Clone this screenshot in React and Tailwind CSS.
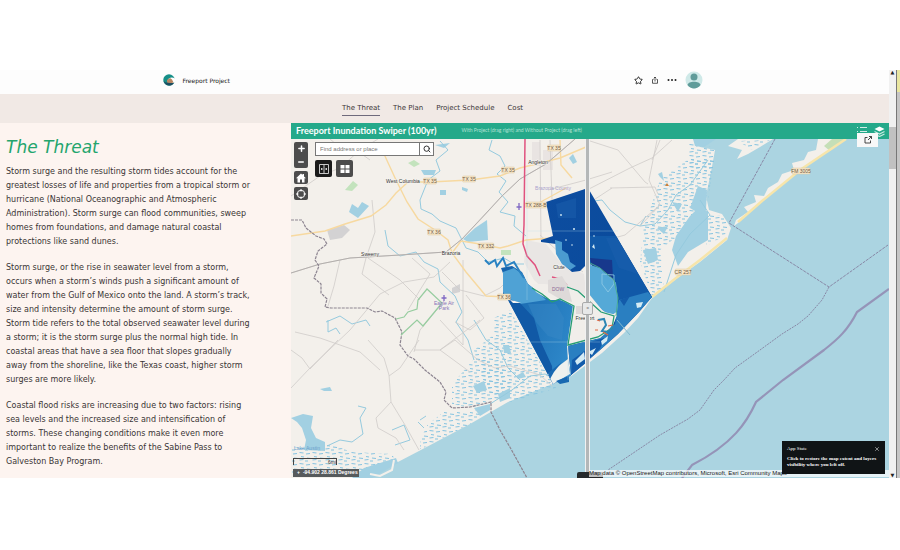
import React from 'react';
import { Search, Home, X, Plus, Minus, ExternalLink, Star, Layers } from 'lucide-react';

const navItems = ['The Threat', 'The Plan', 'Project Schedule', 'Cost'];

const paragraphs = [
  'Storm surge and the resulting storm tides account for the greatest losses of life and properties from a tropical storm or hurricane (National Oceanographic and Atmospheric Administration). Storm surge can flood communities, sweep homes from foundations, and damage natural coastal protections like sand dunes.',
  'Storm surge, or the rise in seawater level from a storm, occurs when a storm’s winds push a significant amount of water from the Gulf of Mexico onto the land. A storm’s track, size and intensity determine the amount of storm surge. Storm tide refers to the total observed seawater level during a storm; it is the storm surge plus the normal high tide. In coastal areas that have a sea floor that slopes gradually away from the shoreline, like the Texas coast, higher storm surges are more likely.',
  'Coastal flood risks are increasing due to two factors: rising sea levels and the increased size and intensification of storms. These changing conditions make it even more important to realize the benefits of the Sabine Pass to Galveston Bay Program.',
];

const shields = [
  { label: 'TX 35', x: 430, y: 181 },
  { label: 'TX 35', x: 469, y: 179 },
  { label: 'TX 35', x: 508, y: 170 },
  { label: 'TX 35', x: 554, y: 148 },
  { label: 'TX 36', x: 434, y: 232 },
  { label: 'TX 332', x: 486, y: 246 },
  { label: 'TX 288-B', x: 536, y: 205 },
  { label: 'TX 36', x: 504, y: 297 },
  { label: 'CR 257', x: 683, y: 272 },
  { label: 'FM 3005', x: 801, y: 171 },
];

const places = [
  { label: 'West Columbia', x: 403, y: 183 },
  { label: 'Angleton', x: 538, y: 164 },
  { label: 'Sweeny', x: 370, y: 256 },
  { label: 'Brazoria', x: 451, y: 255 },
  { label: 'Clute', x: 559, y: 269 },
  { label: 'Freeport', x: 585, y: 320 },
];

const roads = [
  'M291 273 L320 264 L350 258 L400 255 L446 252 L462 239 L484 216 L502 196 L520 179 L546 164 L575 139',
  'M295 332 L320 338 L360 352 L380 370',
  'M291 388 L310 368 L350 330 L380 294 L404 282 L434 277 L450 262',
  'M378 139 L360 150 L340 168 L320 176 L291 196',
  'M372 200 L375 232 L366 258 L362 274 L389 295',
  'M340 260 L334 286 L328 306',
  'M368 258 L400 280 L420 300',
  'M412 258 L430 274 L420 290 L408 310',
  'M442 272 L460 290 L484 296 L500 288 L510 278',
  'M463 260 L463 345 L440 320',
  'M368 340 L384 358 L389 375 L391 402 L405 425 L419 450',
  'M391 402 L376 418 L378 428 L396 438 L404 450',
  'M419 340 L400 368 L389 376',
  'M455 340 L440 350 L414 350',
  'M291 350 L302 358 L310 369 L338 340',
  'M455 340 L478 360 L495 368 L510 366',
  'M672 140 L652 158 L630 168 L587 190',
  'M657 140 L649 180 L660 205 L640 226',
  'M587 140 L618 150 L645 182 L648 184',
  'M610 188 L655 187 L658 194',
  'M548 190 L586 180 L612 172',
  'M540 140 L541 240',
  'M550 140 L552 200',
  'M660 140 L652 160',
  'M480 320 L440 350 L470 372',
  'M440 306 L420 330 L414 352',
  'M586 205 L612 188',
  'M510 366 L540 375 L552 386',
  'M466 295 L484 318 L470 330 L455 322',
  'M330 139 L345 152 L356 150 L370 160',
  'M540 235 L570 262 L583 272',
  'M600 242 L625 235 L660 205',
];

const highways = [
  'M291 236 L325 231 L345 224 L371 216 L386 205 L396 193 L408 182 L430 182 L470 180 L500 176 L520 168 L560 158 L586 147',
  'M384 154 L396 180 L407 202 L418 219 L435 230 L448 240 L452 253 L466 272 L486 296 L508 297',
  'M452 253 L461 241 L480 244 L500 248 L508 246 L526 240 L552 238',
  'M535 205 L548 198 L566 188',
  'M560 140 L561 165 L572 178',
];

const creeks = [
  'M440 141 L448 150 L436 160 L440 171 L428 180 L420 200 L421 209 L432 214 L440 221 L456 228 L466 248 L478 252 L488 262 L504 258 L514 264 L524 264',
  'M492 140 L489 150 L500 156 L505 166 L497 174 L506 181 L499 192 L508 202 L500 212 L515 216 L514 226 L526 236',
  'M385 230 L388 246 L400 256 L416 252 L424 262 L438 269 L440 282 L455 296 L462 312 L456 322 L468 340 L474 360',
  'M326 322 L340 316 L352 324 L366 320 L370 326 M328 320 L328 332 L336 328 L340 334',
  'M327 446 L340 440 L352 442 L363 434 L360 418 L366 408 L358 406',
  'M586 202 L602 200 L610 210 L625 222 L640 226 L646 216',
  'M474 320 L486 340 L500 350 L508 368 L520 380',
  'M640 226 L655 224 L668 210 L676 195 L690 185 L708 160',
  'M664 292 L676 255 L690 234 L710 215 L700 200',
  'M392 430 L404 425 L410 440 L395 445',
  'M560 380 L545 374 L530 376 L512 390 L490 404',
  'M420 420 L426 416 M424 428 L418 422',
];

const marshes = [
  'M494 318 L510 310 L548 376 L556 388 L512 402 L492 396 L480 372 L474 350 L492 336 Z',
  'M475 358 L500 364 L510 378 L510 396 L470 408 L452 404 L452 384 Z',
  'M428 424 L444 412 L470 412 L490 406 L470 424 L420 450 L420 440 Z',
  'M291 448 L330 444 L352 452 L392 454 L396 462 L368 478 L291 478 Z',
  'M660 180 L690 158 L714 160 L708 200 L700 214 L690 226 L660 250 L664 286 L652 296 L640 262 L644 226 Z',
  'M688 142 L716 148 L712 172 L690 170 Z',
  'M706 214 L722 216 L730 224 L724 236 L706 246 Z',
  'M738 141 L770 140 L752 150 Z',
];

// Geographic drawing: basemap, county lines and the flood depth layer
const InundationMap = () => (
  <svg
    className="absolute inset-0 h-full w-full"
    viewBox="291 139 598 339"
    preserveAspectRatio="xMidYMid slice"
    fontFamily="'Liberation Sans', sans-serif"
    role="img"
    aria-label="Freeport inundation map"
  >
    <defs>
      <pattern id="marsh" width="13" height="11" patternUnits="userSpaceOnUse">
        <path d="M0.500 1.500l4 0.500M7 3l4 -0.500M2 5.500l3 0.500M8 7l4 0.500M0.500 9l4 -0.500M6 10h3" stroke="#86c3e0" strokeWidth="1.200" />
      </pattern>
      <linearGradient id="westDepth" x1="0" y1="0.200" x2="1" y2="0.800">
        <stop offset="0" stopColor="#1664ae" />
        <stop offset="0.500" stopColor="#2377bb" />
        <stop offset="1" stopColor="#2f8acb" />
      </linearGradient>
      <linearGradient id="northDepth" x1="0" y1="0" x2="1" y2="1">
        <stop offset="0" stopColor="#0d4da0" />
        <stop offset="0.600" stopColor="#0a4b9c" />
        <stop offset="1" stopColor="#1464ad" />
      </linearGradient>
    </defs>

    <rect x="291" y="139" width="598" height="339" fill="#abd4e1" />
    <path
      d="M291 139 H693 L700 147 L715 150 L711 172 L706 196 L709 210 L722 214 L731 228 L727 240 L700 262 L676 279 L652 298 L638 318 L624 333 L602 353 L570 377 L540 389 L508 402 L470 424 L419 451 L396 463 L366 478 H291 Z"
      fill="#f3f0eb"
    />
    <path d="M738 139 H773 L760 147 L748 154 L737 159 L742 150 L728 146 Z" fill="#f3f0eb" />
    <path
      d="M846 139 L800 170 L762 201 L738 223 L734 226 L736 220 L748 212 L744 207 L756 202 L754 195 L764 196 L768 188 L778 182 L782 174 L794 170 L792 163 L804 160 L808 152 L816 150 L818 139 Z"
      fill="#f3f0eb"
    />
    <path d="M832 139 H846 L830 151 L824 146 Z" fill="#c5dfb7" />

    {marshes.map((d) => (
      <path key={d} d={d} fill="url(#marsh)" />
    ))}

    {/* Lakes and lagoons */}
    <g fill="#a2d0e2">
      <path d="M463 239 L475 228 L487 220 L488 240 L468 242 Z" />
      <path d="M349 212 L352 204 L358 208 L362 202 L369 206 L358 218 Z" />
      <path d="M291 418 L303 414 L313 416 L311 428 L316 438 L325 442 L325 451 L304 450 L306 440 L302 428 L297 422 Z" />
      <path d="M320 389 l10 -2 l2 4 l-8 0 Z" />
      <path d="M473 386 L484 381 L487 390 L477 393 Z" />
      <path d="M474 408 L490 404 L490 410 L480 416 Z" />
      <path d="M498 394 L510 388 V398 L500 402 Z" />
      <path d="M421 170 L436 170 L434 175 L424 175 Z M435 145 L450 143 L444 148 Z" />
      <path d="M440 190 h6 v5 h-6 Z M462 187 l6 2 l-1 3 l-5 -2 Z" />
      <path d="M569 158 l4 -4 l4 8 l-4 2 Z" />
      <path d="M658 174 l4 -2 l2 9 l-4 -4 Z" />
      <path d="M693 139 H716 L704 147 L695 146 Z" />
      <path d="M672 250 L676 236 L690 216 L700 206 L708 212 L708 240 L688 252 L678 266 Z" />
      <path d="M643 250 L656 248 L658 260 L648 264 Z M657 228 L668 226 L664 234 Z M672 202 L682 204 L678 212 Z" />
      <path d="M698 186 L707 190 L706 210 L700 214 L690 208 Z" />
      <path d="M503 345 l6 0 l2 8 l-7 0 Z M516 376 l7 -4 l3 5 l-8 2 Z" />
      <path d="M364 468 L396 458 L398 463 L372 478 H352 Z" />
    </g>
    <path d="M394 460 L392 470 L380 476 L370 474" fill="none" stroke="#f3f0eb" strokeWidth="2" />

    {/* Woods and built-up areas */}
    <path d="M345 190 l8 -9 l5 4 l-6 6 Z M408 163 l6 -3 l6 4 l-6 3 Z M501 250 h10 v5 h-10 Z" fill="#c3e3bd" />
    <path d="M327 230 L344 225 L350 230 L342 238 L330 240 Z M452 288 l8 -4 v8 l-8 2 Z" fill="#d3d2d3" />
    <path d="M526 240 L546 244 L560 262 L584 274 L587 300 L556 300 L534 280 L524 262 Z" fill="#e9e6e4" />
    <path d="M532 142 h8 v24 h-8 Z M543 150 h10 v20 h-10 Z" fill="#e9e4e2" />

    <g fill="none" stroke="#95cade" strokeWidth="1">
      {creeks.map((d) => (
        <path key={d} d={d} />
      ))}
    </g>
    <g fill="none" stroke="#cfccc9" strokeWidth="0.800">
      {roads.map((d) => (
        <path key={d} d={d} />
      ))}
    </g>
    <g fill="none" stroke="#f7d9a0" strokeWidth="1.400">
      {highways.map((d) => (
        <path key={d} d={d} />
      ))}
    </g>
    <path d="M291 273 L320 264 L350 258 L400 255 L446 252 L462 239 L502 196 L520 179 L546 164 L575 139" fill="none" stroke="#b3afad" strokeWidth="1" />
    <path d="M525 139 L524 225 L523 244 L527 256 L535 265 L540 276 M552 277 L560 279 L567 285" fill="none" stroke="#e0527f" strokeWidth="1.500" />
    <path d="M846 139 L800 170 L762 201 L738 222 M727 238 L700 260 L676 278 L652 297" fill="none" stroke="#f6e5ab" strokeWidth="2.500" />

    {/* County and state lines */}
    <path
      d="M291 220 L302 220 L306 228 L316 236 L324 239 L327 244 L318 251 L315 260 L319 266 L314 278 L321 284 L321 293 L327 299 L325 307 L331 308 L367 308 L375 312 L382 311 L395 318 L402 332 L400 345 L408 356 L414 359 L425 370 L440 382 L446 392 L444 400 L452 408 L470 407 L491 402 L491 412 L500 430 L511 449 L527 478"
      fill="none" stroke="#8d8591" strokeWidth="1.200" strokeDasharray="3 1"
    />
    <path d="M775 139 L747 190 L729 223 L829 287 L888 245" fill="none" stroke="#8888a6" strokeWidth="1" strokeDasharray="3 1" />
    <path d="M829 287 L822 300 L808 316 L798 324 L782 334 L760 350 L735 368 L724 380 L714 390 L700 410 L688 419 L660 435 L608 470" fill="none" stroke="#8888a6" strokeWidth="1" strokeDasharray="2 1" />
    <path d="M889 289 L857 312 C848 330 838 339 824 350 L783 380 L756 402 C747 422 733 444 692 465 L682 478" fill="none" stroke="#9594b8" strokeWidth="2.200" />
    <path d="M396 319 L404 317 L408 312 L417 309 L418 300 L427 289 L442 303 L423 326 L417 320 L401 335" fill="none" stroke="#97cda0" strokeWidth="1.200" />

    {/* Flood depth, north and east */}
    <path
      d="M546 202 L588 188 L652 297 L639 312 L618 334 L600 350 L571 375 L568 346 L600 338 L613 324 L618 312 L619 296 L616 283 L600 266 L587 264 L580 271 L572 272 L563 264 L557 254 L556 244 L541 242 L541 240 L553 236 Z"
      fill="url(#northDepth)"
    />
    <path d="M588 236 L616 236 L652 297 L618 330 L616 283 L600 266 L588 262 Z" fill="#1159a8" />
    <path d="M590 258 L612 260 L613 278 L602 274 L592 266 Z" fill="#17388c" />
    <path d="M606 238 H617 L638 274 L619 268 Z M556 204 l20 -6 v20 h-18 Z" fill="#1c60ae" opacity="0.500" />
    <path d="M587 264 L600 268 L616 283 L619 310 L611 316 L602 310 L589 294 Z" fill="#55a9d7" />
    <path d="M602 274 L614 275 L614 284 L608 292 L602 284 Z" fill="none" stroke="#92cbe6" strokeWidth="0.800" />
    <path d="M619 300 L648 292 L652 297 L639 312 L618 334 L600 350 L571 375 L568 346 L600 338 L615 324 Z" fill="#2a7fc1" />
    <path d="M572 360 L586 350 L587 362 L571 375 Z M590 342 L604 338 L600 349 L590 358 Z M620 300 L630 296 L624 306 Z" fill="#135baa" />
    <path d="M555 240 L562 242 L562 250 L568 254 L570 262 L576 266 L570 270 L562 264 L556 254 Z" fill="#4b9bd0" />
    <g fill="#d4ebf4">
      <path d="M601 341 L608 336 L607 341 L602 345 Z M575 361 L584 352 L585 359 L577 365 Z M588 352 l8 -4 l-4 7 Z" />
      <path d="M636 303 l7 -1 l-2 5 l-4 1 Z M592 247 l2 -3 l1 5 Z" />
      <circle cx="561" cy="215" r="0.900" />
      <circle cx="574" cy="229" r="1" />
      <circle cx="594" cy="236" r="0.800" />
      <circle cx="572" cy="245" r="0.800" />
      <circle cx="566" cy="240" r="0.800" />
    </g>

    {/* Flood depth, west */}
    <path d="M501 268 L512 266 L522 272 L528 284 L538 292 L550 300 L560 300 L573 305 L567 346 L568 360 L571 376 L553 384 L508 300 L503 294 L504 276 Z" fill="url(#westDepth)" />
    <path d="M503 272 L514 268 L522 274 L528 284 L538 292 L546 300 L520 304 L508 299 L503 292 Z" fill="#4fa2d5" />
    <path d="M507 298 L520 303 L534 318 L540 340 L552 366 L553 384 Z" fill="#1159a6" />
    <path d="M528 304 L556 304 L564 318 L562 340 L548 336 L536 322 Z" fill="#3787c6" opacity="0.500" />
    <path d="M548 374 L568 359 L570 374 L553 384 Z" fill="#eff1ee" />
    <path d="M548 373 L562 362 L554 372 L550 379 Z M556 381 L569 376 V382 L560 384 Z" fill="#1868b1" />
    <path d="M510 300 l5 1 l6 2 l-8 0 Z" fill="#f6f4f0" />
    <path d="M485 260 L489 264 L495 260 L497 266 L503 258 L506 266 L514 262 L520 272 L524 278" fill="none" stroke="#2a82c2" strokeWidth="2" />
    <path d="M527 170 V300 M527 231 H618 M527 342 H600 M568 345 V380" stroke="#bfe0ed" strokeWidth="0.600" opacity="0.500" />

    {/* Freeport, enclosed by its levee */}
    <path d="M532 284 L545 284 L564 286 L588 296 L604 312 L617 315 L612 328 L600 338 L568 345 L574 307 L560 299 L546 298 L536 292 Z" fill="#f1eeea" />
    <path d="M548 280 L562 276 L568 286 L572 302 L558 298 L548 292 Z M576 306 h8 v8 h-8 Z" fill="#dedad9" />
    <path d="M567 287 L578 291 L590 302 L601 312 L614 316 L612 328 L598 337 L568 345 L574 306 L560 299 L552 302 L542 294 L532 288" fill="none" stroke="#269d73" strokeWidth="1.300" />
    <path d="M588 262 L600 268 L614 280 L618 298 L616 316" fill="none" stroke="#48aa92" strokeWidth="1" />
    <path d="M598 320 L604 319 L606 325 L602 331 L608 332 L614 325" fill="none" stroke="#2b86b4" strokeWidth="2" />
    <path d="M595 330 h3 M603 332 l5 3 M608 326 l5 -1 M597 320 l3 1" stroke="#e16b45" strokeWidth="1.200" />
    <path d="M617 320 L630 335" stroke="#82bad1" strokeWidth="1" />

    {shields.map((s, i) => (
      <g key={i}>
        <rect
          x={s.x - s.label.length * 1.3}
          y={s.y - 3}
          width={s.label.length * 2.6}
          height="6"
          rx="1"
          fill="#f6e6c8"
          stroke="#dcc8a3"
          strokeWidth="0.500"
        />
        <text x={s.x} y={s.y + 2} fontSize="5" textAnchor="middle" fill="#6f5a43">{s.label}</text>
      </g>
    ))}
    {places.map((p) => (
      <text key={p.label} x={p.x} y={p.y} fontSize="5" textAnchor="middle" fill="#333" stroke="#f6f4f0" strokeWidth="1" paintOrder="stroke">
        {p.label}
      </text>
    ))}
    <g fontSize="5" textAnchor="middle">
      <text x="553" y="190" fill="#aaa3cc">Brazoria County</text>
      <text x="444" y="305" fill="#8674b8">Eagle Air</text>
      <text x="444" y="310" fill="#8674b8">Park</text>
      <text x="558" y="291" fill="#8c6796">DOW</text>
      <text x="307" y="450" fill="#6aa0cb">Lake Austin</text>
    </g>
    <path d="M444 295 v6 M441.500 298 h5 M519 203 v7 M516.500 207 h5" stroke="#8068c4" strokeWidth="1.300" />
    <path d="M665 186 l2 -3 l2 3 Z" fill="#c9803b" />
  </svg>
);

const ProjectLogo = () => (
  <svg className="size-3 shrink-0" viewBox="0 0 24 24" aria-hidden="true">
    <circle cx="12" cy="12" r="11.500" fill="#178f88" />
    <path d="M24 9 C18 5 11 7 9 13 C10 18 16 20 22 17 L24 15 Z" fill="#fff" />
    <path d="M8 12 L14 8 L18 11 L21 17 L14 19 L8 17 Z" fill="#b98662" />
    <path d="M1 14 C5 18 12 18 22 18 C18 25 5 26 1 14 Z" fill="#1d4d60" />
  </svg>
);

const ShareIcon = () => (
  <svg className="size-2" viewBox="0 0 16 16" fill="none" stroke="currentColor" strokeWidth="1.500" aria-hidden="true">
    <path d="M5 7H3v7.500h10V7h-2M8 11V2M5.500 4.500L8 2l2.500 2.500" />
  </svg>
);

const TopBar = () => (
  <header className="bg-[#fdfdfd] pr-6">
    <div className="mx-auto flex h-6 max-w-[540px] items-start justify-between">
      <a href="#home" className="flex h-5 items-center gap-2 text-[6px] text-[#222]">
        <ProjectLogo />
        <span>Freeport Project</span>
      </a>
      <div className="flex h-5 items-center gap-2 text-[#222]">
        <button aria-label="Favorite"><Star className="size-[9px]" strokeWidth={2.5} /></button>
        <button aria-label="Share"><ShareIcon /></button>
        <button aria-label="More">
          <svg className="h-2 w-[10px]" viewBox="0 0 10 8" fill="currentColor" aria-hidden="true">
            <circle cx="1.500" cy="4" r="1" />
            <circle cx="5" cy="4" r="1" />
            <circle cx="8.500" cy="4" r="1" />
          </svg>
        </button>
        <button aria-label="Account">
          <svg className="size-[18px]" viewBox="0 0 36 36" aria-hidden="true">
            <circle cx="18" cy="18" r="17" fill="#cfe9e8" />
            <circle cx="18" cy="12" r="7" fill="#609c9a" />
            <path d="M5 28 C6 19 30 19 31 28 C25 37 11 37 5 28 Z" fill="#609c9a" />
          </svg>
        </button>
      </div>
    </div>
  </header>
);

const NavBar = () => (
  <nav className="flex h-[29px] items-center justify-center gap-[13px] bg-[#f1e9e5] pr-6 text-[7px] text-[#3d3739]">
    {navItems.map((item, i) => (
      <a
        key={item}
        href={`#section-${i}`}
        className={i === 0 ? 'border-b border-[#6f6a7c] py-[2px]' : 'border-b border-transparent py-[2px]'}
      >
        {item}
      </a>
    ))}
  </nav>
);

const MapControls = () => (
  <div className="absolute top-[3px] left-[3px] flex gap-[7px]">
    <div className="flex flex-col gap-[3px] text-white">
      <div className="flex flex-col rounded-xs bg-[#4c4c4c]">
        <button aria-label="Zoom in" className="flex h-[13px] w-[14px] items-center justify-center"><Plus size={9} strokeWidth={4} /></button>
        <button aria-label="Zoom out" className="flex h-[13px] w-[14px] items-center justify-center"><Minus size={8} strokeWidth={4} /></button>
      </div>
      <button aria-label="Default extent" className="flex h-[13px] w-[14px] items-center justify-center rounded-xs bg-[#4c4c4c]">
        <svg className="size-[10px]" viewBox="0 0 20 20" fill="currentColor" aria-hidden="true">
          <path d="M10 1L0 10.500h3V19h5v-6h4v6h5v-8.500h3L16 7V2h-3v2z" />
        </svg>
      </button>
      <button aria-label="My location" className="flex h-[13px] w-[14px] items-center justify-center rounded-xs bg-[#4c4c4c]">
        <svg className="size-[10px]" viewBox="0 0 20 20" fill="none" stroke="currentColor" strokeWidth="2" aria-hidden="true">
          <circle cx="10" cy="10" r="7.500" />
          <path d="M10 0v5M10 15v5M0 10h5M15 10h5" />
        </svg>
      </button>
    </div>
    <div className="flex flex-col gap-1">
      <form className="flex h-[14px] w-[119px] border border-[#777] bg-white" onSubmit={(e) => e.preventDefault()}>
        <input
          type="text"
          aria-label="Find address or place"
          placeholder="Find address or place"
          className="min-w-0 flex-1 px-1 font-['Liberation_Sans',sans-serif] text-[6px] leading-3 text-[#444] outline-none placeholder:text-[#777]"
        />
        <button aria-label="Search" className="flex w-[14px] items-center justify-center border-l border-[#777] text-[#333]">
          <Search size={8} strokeWidth={3} />
        </button>
      </form>
      <div className="flex gap-1">
        <button aria-label="Swipe" className="flex size-[17px] items-center justify-center rounded-xs bg-[#1b1b1b] text-[#ddd]">
          <svg className="size-[10px]" viewBox="0 0 20 20" fill="none" stroke="currentColor" strokeWidth="1.800" aria-hidden="true">
            <path d="M1 1h18v18H1zM10 1v18M4 10h4M6 8l-2 2l2 2M12 10h4M14 8l2 2l-2 2" />
          </svg>
        </button>
        <button aria-label="Basemap gallery" className="flex size-[17px] items-center justify-center rounded-xs bg-[#4c4c4c] text-white">
          <svg className="size-[10px]" viewBox="0 0 20 20" fill="currentColor" aria-hidden="true">
            <path d="M1 2h8v7H1zM11 2h8v7h-8zM1 11h8v7H1zM11 11h8v7h-8z" />
          </svg>
        </button>
      </div>
    </div>
  </div>
);

const SwipeMap = () => (
  <section className="relative flex min-w-0 flex-1 flex-col font-['Lato',sans-serif]">
    <div className="flex h-4 items-center gap-[25px] bg-[#25a98a] pr-1 pl-[5px]">
      <h2 className="text-[9px] leading-3 font-bold whitespace-nowrap text-white">Freeport Inundation Swiper (100yr)</h2>
      <span className="flex-1 text-[5px] whitespace-nowrap text-[#b5e2d5]">With Project (drag right) and Without Project (drag left)</span>
      <div className="flex items-center gap-[6px] text-white">
        <svg className="h-[9px] w-3 opacity-80" viewBox="0 0 12 9" fill="currentColor" aria-hidden="true">
          <path d="M1 0h1v1h-1zM4 0h7v1h-7zM1 4h1v1h-1zM4 4h7v1h-7z" />
        </svg>
        <svg className="size-[11px]" viewBox="0 0 22 22" aria-hidden="true">
          <path d="M11 1L21 6L11 11L1 6z" fill="#fff" />
          <path d="M1 11L11 16L21 11M1 16L11 21L21 16" fill="none" stroke="#c8eae0" strokeWidth="2.500" />
        </svg>
      </div>
    </div>

    <div className="relative flex-1 overflow-hidden">
      <InundationMap />
      <MapControls />

      {/* Swipe handle */}
      <div className="absolute inset-y-0 left-[49.2%] flex w-[5px] items-center justify-center border-x border-[#f1f1f1] bg-[#b4b7b8]">
        <button aria-label="Drag to compare" className="h-[13px] w-[11px] shrink-0 rounded-xs border border-[#aaa] bg-[#e7e8e8] text-[5px] leading-[5px] text-[#777]">=</button>
      </div>

      <div className="absolute bottom-[1px] left-[2px] flex w-[66px] flex-col gap-1 font-['Liberation_Sans',sans-serif] text-[5px]">
        <div className="flex w-[44px] justify-end border-x border-t border-[#444] pt-[1px] leading-[5px] text-[#333]">6mi</div>
        <div className="flex h-2 items-center gap-[3px] bg-[#565a5c] pl-1 font-bold whitespace-nowrap text-white">
          <span>+</span>
          <span>-94.902 28.861 Degrees</span>
        </div>
      </div>

      <div className="absolute bottom-0 left-[286px] h-[6px] w-[26px] rounded-t-xs bg-[#26292b]" />
      <p className="absolute right-0 bottom-[1px] left-[298px] bg-white/70 font-['Liberation_Sans',sans-serif] text-[6px] leading-[7px] whitespace-nowrap text-[#222]">
        Map data © OpenStreetMap contributors, Microsoft, Esri Community Maps
      </p>

      <aside className="absolute right-1 bottom-1 w-[103px] bg-[#101416] px-[5px] pt-[5px] pb-[6px] font-['Liberation_Serif',serif] text-[5px] leading-[6px] text-white">
        <div className="mb-1 flex justify-between">
          <span>App State</span>
          <button aria-label="Close"><X size={6} /></button>
        </div>
        <p className="font-bold">Click to restore the map extent and layers visibility where you left off.</p>
      </aside>
    </div>

    <button aria-label="Open in new window" className="absolute top-[10px] right-[11px] flex h-[14px] w-[21px] items-center justify-center bg-[#f8f8f8] text-[#333]">
      <svg className="size-2" viewBox="0 0 16 16" fill="none" stroke="currentColor" strokeWidth="1.800" aria-hidden="true">
        <path d="M7 3H2v11h11V9M10 1h5v5M15 1L8 8" />
      </svg>
    </button>
  </section>
);

const App = () => (
  <div className="min-h-screen bg-white py-[70px] font-['DejaVu_Sans',sans-serif]">
    <div className="flex">
      <div className="min-w-0 flex-1">
        <TopBar />
        <NavBar />
        <main className="flex">
          <article className="w-[291px] shrink-0 bg-[#fdf4f0] pt-3 pr-[37px] pb-[9px] pl-[6px]">
            <h1 className="mb-[6px] text-[17px] leading-6 text-[#24a56d] italic">The Threat</h1>
            <div className="flex flex-col gap-3 text-[8px] leading-[14px] text-[#3a3435]">
              {paragraphs.map((text) => (
                <p key={text}>{text}</p>
              ))}
            </div>
          </article>
          <SwipeMap />
        </main>
      </div>

      {/* Page scrollbar */}
      <div className="flex w-[7px] flex-col items-center bg-[#f1f1f1] text-[5px] leading-[5px] text-[#222]">
        <span>▲</span>
        <div className="mt-[52px] h-[42px] w-full bg-[#c1c1c1]" />
        <span className="mt-auto">▼</span>
      </div>

      {/* Edge of the window behind */}
      <div className="flex w-1 flex-col border-l border-[#777]">
        <div className="h-[22px] bg-[#e9e6a0]" />
        <div className="flex-1 bg-[#c6c6c6]" />
      </div>
    </div>
  </div>
);

export default App;
